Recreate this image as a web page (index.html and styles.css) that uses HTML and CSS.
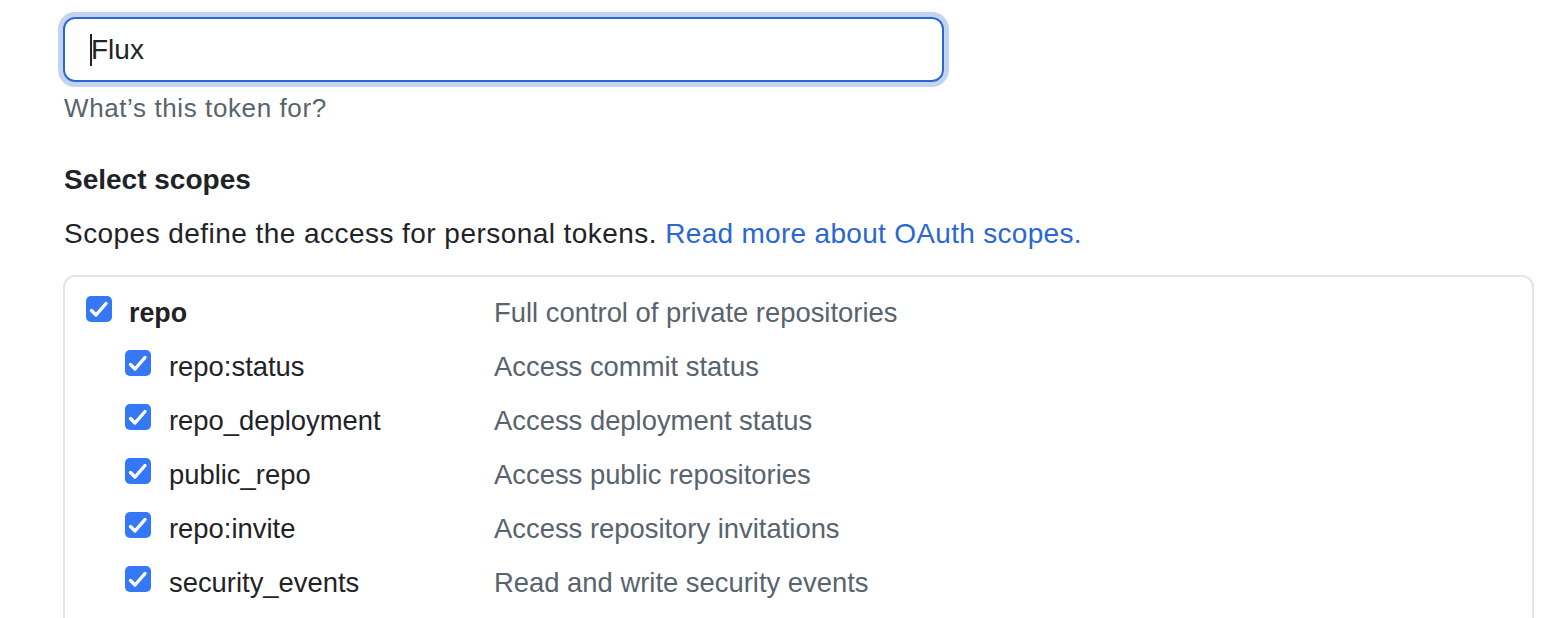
FILE: index.html
```html
<!DOCTYPE html>
<html>
<head>
<meta charset="utf-8">
<link rel="stylesheet" href="styles.css">
</head>
<body>
<div class="page">
  <div class="input"><span class="caret"></span><span class="value">Flux</span></div>
  <p class="note">What’s this token for?</p>
  <h3 class="heading">Select scopes</h3>
  <p class="desc">Scopes define the access for personal tokens. <a class="link" href="#">Read more about OAuth scopes.</a></p>
  <div class="scopes">
    <div class="row parent">
      <div class="name"><span class="cb"><svg viewBox="0 0 26 26" width="26" height="26"><path d="M5.5 14.5 L10 19 L20 7.5" fill="none" stroke="#fff" stroke-width="3.4" stroke-linecap="round" stroke-linejoin="round"/></svg></span><span class="label bold">repo</span></div>
      <div class="info">Full control of private repositories</div>
    </div>
    <div class="row child">
      <div class="name"><span class="cb"><svg viewBox="0 0 26 26" width="26" height="26"><path d="M5.5 14.5 L10 19 L20 7.5" fill="none" stroke="#fff" stroke-width="3.4" stroke-linecap="round" stroke-linejoin="round"/></svg></span><span class="label">repo:status</span></div>
      <div class="info">Access commit status</div>
    </div>
    <div class="row child">
      <div class="name"><span class="cb"><svg viewBox="0 0 26 26" width="26" height="26"><path d="M5.5 14.5 L10 19 L20 7.5" fill="none" stroke="#fff" stroke-width="3.4" stroke-linecap="round" stroke-linejoin="round"/></svg></span><span class="label">repo_deployment</span></div>
      <div class="info">Access deployment status</div>
    </div>
    <div class="row child">
      <div class="name"><span class="cb"><svg viewBox="0 0 26 26" width="26" height="26"><path d="M5.5 14.5 L10 19 L20 7.5" fill="none" stroke="#fff" stroke-width="3.4" stroke-linecap="round" stroke-linejoin="round"/></svg></span><span class="label">public_repo</span></div>
      <div class="info">Access public repositories</div>
    </div>
    <div class="row child">
      <div class="name"><span class="cb"><svg viewBox="0 0 26 26" width="26" height="26"><path d="M5.5 14.5 L10 19 L20 7.5" fill="none" stroke="#fff" stroke-width="3.4" stroke-linecap="round" stroke-linejoin="round"/></svg></span><span class="label">repo:invite</span></div>
      <div class="info">Access repository invitations</div>
    </div>
    <div class="row child">
      <div class="name"><span class="cb"><svg viewBox="0 0 26 26" width="26" height="26"><path d="M5.5 14.5 L10 19 L20 7.5" fill="none" stroke="#fff" stroke-width="3.4" stroke-linecap="round" stroke-linejoin="round"/></svg></span><span class="label">security_events</span></div>
      <div class="info">Read and write security events</div>
    </div>
  </div>
</div>
</body>
</html>
```

FILE: styles.css
```css
html, body {
  margin: 0;
  padding: 0;
  background: #ffffff;
  overflow: hidden;
}
body {
  font-family: "Liberation Sans", Arial, sans-serif;
  color: #1f2328;
}
.page {
  padding: 17px 0 0 63px;
  display: flex;
  flex-direction: column;
  align-items: flex-start;
}
.input {
  box-sizing: border-box;
  width: 881px;
  height: 65px;
  border: 2px solid #2b67d2;
  border-radius: 12px;
  box-shadow: 0 0 0 5px #c3d4f1;
  display: flex;
  align-items: center;
  padding-left: 25px;
  font-size: 28px;
  color: #1f2328;
}
.caret {
  width: 2px;
  height: 32px;
  background: #1f2328;
  margin-right: -1px;
}
.note {
  margin: 8px 0 0 1px;
  font-size: 26px;
  letter-spacing: 0.6px;
  line-height: 36px;
  color: #59636e;
}
.heading {
  margin: 36px 0 0 1px;
  font-size: 28px;
  line-height: 36px;
  font-weight: bold;
  color: #1f2328;
}
.desc {
  margin: 16px 0 0 1px;
  font-size: 28px;
  letter-spacing: 0.45px;
  line-height: 40px;
  color: #1f2328;
}
.link {
  color: #2a67d2;
  text-decoration: none;
  letter-spacing: 0.3px;
}
.scopes {
  box-sizing: border-box;
  margin-top: 21px;
  width: 1471px;
  height: 400px;
  border: 2px solid #e3e4e8;
  border-radius: 12px;
  padding: 9px 0 0 21px;
}
.row {
  display: grid;
  grid-template-columns: 408px 1fr;
  height: 54px;
  align-items: center;
  font-size: 27.4px;
}
.name {
  display: flex;
  align-items: center;
}
.child .name {
  padding-left: 39px;
}
.cb {
  box-sizing: border-box;
  width: 26px;
  height: 26px;
  border-radius: 5px;
  background: #3478f6;
  display: flex;
  margin-right: 17px;
  margin-bottom: 8px;
  flex-shrink: 0;
}
.child .cb {
  margin-right: 18px;
}
.label {
  color: #1f2328;
}
.bold {
  font-weight: bold;
  font-size: 26.8px;
}
.info {
  color: #59636e;
}
```
